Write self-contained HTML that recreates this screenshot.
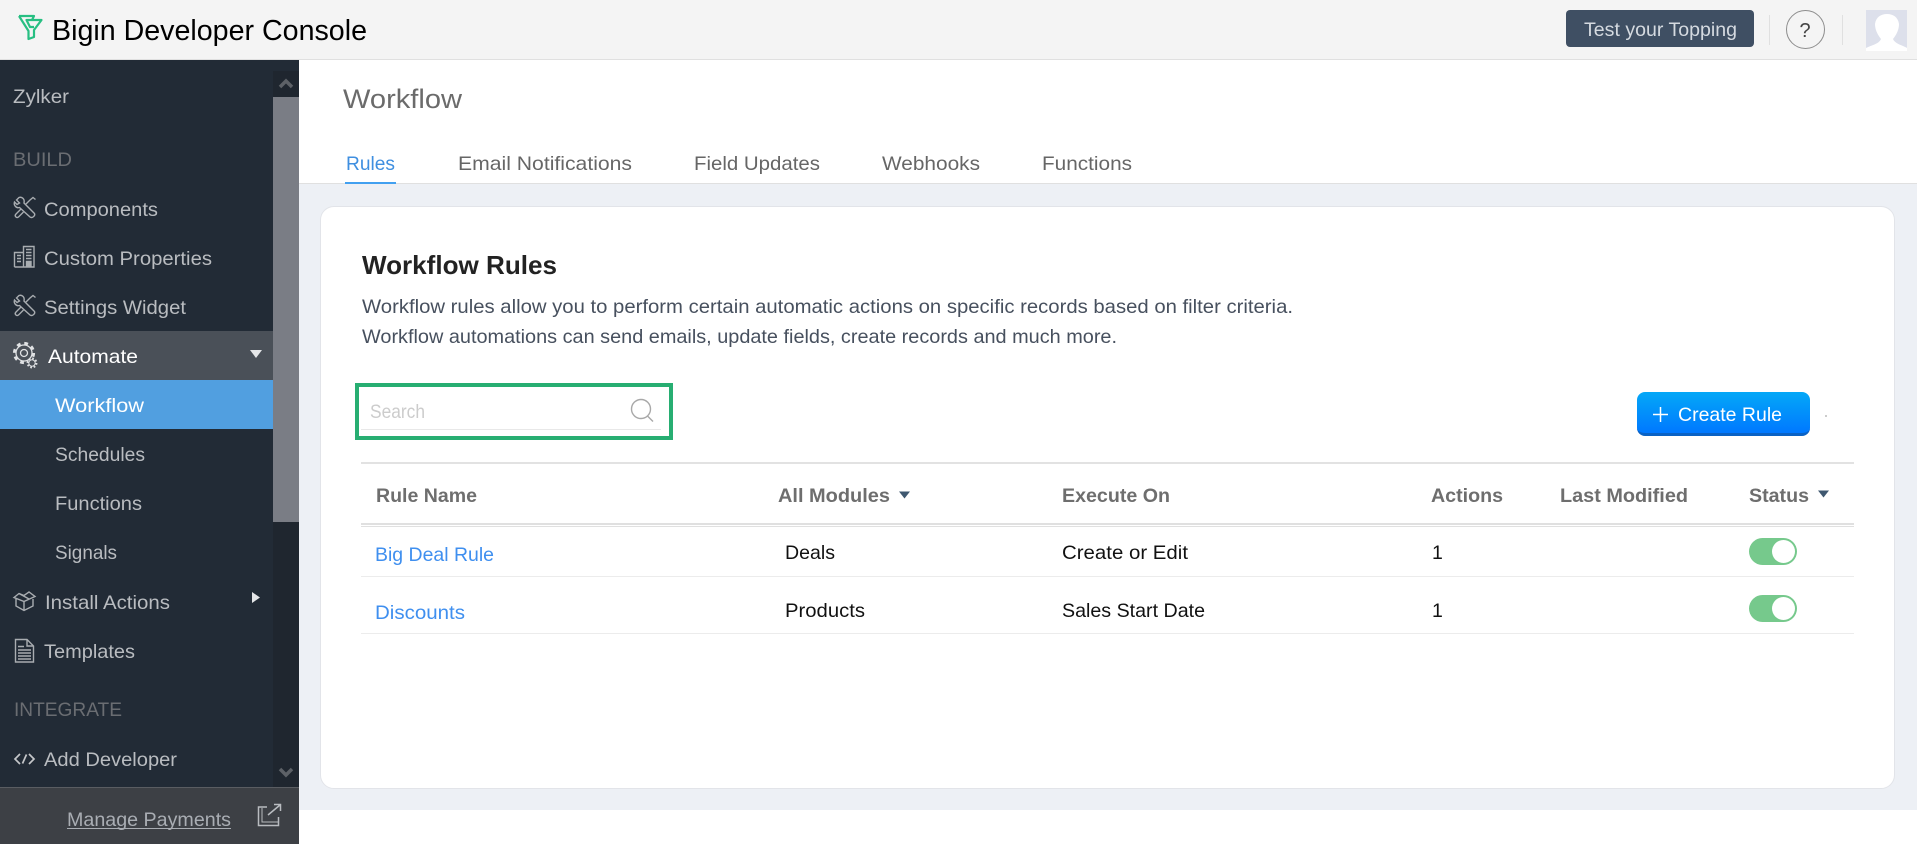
<!DOCTYPE html>
<html><head><meta charset="utf-8"><title>Bigin Developer Console - Workflow</title>
<style>
html,body{margin:0;padding:0;width:1917px;height:844px;overflow:hidden;background:#fff}
div{position:absolute;box-sizing:border-box}
svg{position:absolute;left:0;top:0}
text{font-family:"Liberation Sans",sans-serif;font-size:19.5px}
.n{fill:#b9bcc0}.h{fill:#6a6d72;font-size:19.5px}.t{fill:#666}.b{font-weight:700;fill:#6e6e6e}.c{fill:#111}.l{fill:#3f8fef}
.i{fill:none;stroke:#a9adb1;stroke-width:1.4}
</style></head><body>
<div style="left:0;top:0;width:1917px;height:60px;background:#f4f4f4;border-bottom:1px solid #e0e0e0"></div>
<div style="left:0;top:60px;width:299px;height:727px;background:#222b36"></div>
<div style="left:273px;top:71px;width:26px;height:716px;background:#1f262f"></div>
<div style="left:273px;top:97px;width:26px;height:425px;background:#7a7d85"></div>
<div style="left:0;top:331px;width:273px;height:49px;background:#4a5058"></div>
<div style="left:0;top:380px;width:273px;height:49px;background:#519fe0"></div>
<div style="left:0;top:787px;width:299px;height:57px;background:#3d4045;border-top:1px solid #5a5d62"></div>
<div style="left:299px;top:183px;width:1618px;height:627px;background:#edf0f5;border-top:1px solid #e0e0e0"></div>
<div style="left:345px;top:182px;width:51px;height:2px;background:#42a0f0"></div>
<div style="left:320px;top:206px;width:1575px;height:583px;background:#fff;border:1px solid #e2e4e9;border-radius:14px"></div>
<div style="left:355px;top:383px;width:318px;height:57px;border:4px solid #27ae72"></div>
<div style="left:361px;top:429px;width:300px;height:1px;background:#e8e8e8"></div>
<div style="left:361px;top:462px;width:1493px;height:2px;background:#e2e2e2"></div>
<div style="left:361px;top:523px;width:1493px;height:4px;border-top:2px solid #e0e0e0;border-bottom:1px solid #e0e0e0"></div>
<div style="left:361px;top:576px;width:1493px;height:1px;background:#ececec"></div>
<div style="left:361px;top:633px;width:1493px;height:1px;background:#ececec"></div>
<div style="left:1566px;top:10px;width:188px;height:37px;background:#3f4f63;border-radius:4px"></div>
<div style="left:1769px;top:15px;width:1px;height:30px;background:#e0e0e0"></div>
<div style="left:1842px;top:15px;width:1px;height:30px;background:#e0e0e0"></div>
<div style="left:1786px;top:10px;width:39px;height:39px;border:1px solid #8d8d8d;border-radius:50%"></div>
<div style="left:1866px;top:10px;width:41px;height:41px;background:#dde0eb"></div>
<div style="left:1637px;top:392px;width:173px;height:44px;border-radius:8px;background:linear-gradient(#04a8f7,#0078ff);border-bottom:3px solid #0a62c4"></div>
<div style="left:1825px;top:415px;width:2px;height:2px;background:#ccc"></div>
<div style="left:1749px;top:538px;width:48px;height:27px;border-radius:14px;background:#76c98c"></div>
<div style="left:1749px;top:595px;width:48px;height:27px;border-radius:14px;background:#76c98c"></div>
<div style="left:1772px;top:540px;width:23px;height:23px;border-radius:50%;background:#fff"></div>
<div style="left:1772px;top:597px;width:23px;height:23px;border-radius:50%;background:#fff"></div>

<svg width="1917" height="844" viewBox="0 0 1917 844" xmlns="http://www.w3.org/2000/svg">
<!-- logo -->
<path d="M19 16H34L32 20M19 16L28.500 31V39L34 37V30L41.500 20H26.500L30 27H34" fill="none" stroke="#27bf82" stroke-width="2.200" stroke-linejoin="round"/>
<text x="52" y="40" textLength="315" lengthAdjust="spacingAndGlyphs" style="font-size:28.5px" fill="#000">Bigin Developer Console</text>
<text x="1584" y="36" textLength="153" lengthAdjust="spacingAndGlyphs" style="font-size:19.5px" fill="#d5dae0">Test your Topping</text>
<text x="1805" y="37" text-anchor="middle" style="font-size:20px" fill="#444">?</text>
<path d="M1866 51V48C1872 45 1879 44 1881 39C1877 34 1875 29 1875 24C1876 17 1881 14 1887 14C1893 14 1898 17 1899 24C1899 29 1897 34 1893 39C1895 44 1902 45 1907 48V51Z" fill="#fff"/>
<!-- sidebar -->
<text x="13" y="103" textLength="56" lengthAdjust="spacingAndGlyphs" class="n">Zylker</text>
<text x="13" y="166" textLength="59" lengthAdjust="spacingAndGlyphs" class="h">BUILD</text>
<text x="44" y="216" textLength="114" lengthAdjust="spacingAndGlyphs" class="n">Components</text>
<text x="44" y="265" textLength="168" lengthAdjust="spacingAndGlyphs" class="n">Custom Properties</text>
<text x="44" y="314" textLength="142" lengthAdjust="spacingAndGlyphs" class="n">Settings Widget</text>
<text x="48" y="363" textLength="90" lengthAdjust="spacingAndGlyphs" fill="#fff">Automate</text>
<text x="55" y="412" textLength="89" lengthAdjust="spacingAndGlyphs" fill="#fff">Workflow</text>
<text x="55" y="461" textLength="90" lengthAdjust="spacingAndGlyphs" class="n">Schedules</text>
<text x="55" y="510" textLength="87" lengthAdjust="spacingAndGlyphs" class="n">Functions</text>
<text x="55" y="559" textLength="62" lengthAdjust="spacingAndGlyphs" class="n">Signals</text>
<text x="45" y="609" textLength="125" lengthAdjust="spacingAndGlyphs" class="n">Install Actions</text>
<text x="44" y="658" textLength="91" lengthAdjust="spacingAndGlyphs" class="n">Templates</text>
<text x="14" y="716" textLength="108" lengthAdjust="spacingAndGlyphs" class="h">INTEGRATE</text>
<text x="44" y="766" textLength="133" lengthAdjust="spacingAndGlyphs" class="n">Add Developer</text>
<text x="67" y="826" textLength="164" lengthAdjust="spacingAndGlyphs" fill="#a9adb3">Manage Payments</text>
<path d="M67 828.500H231" stroke="#a9adb3" stroke-width="1"/>
<!-- scroll arrows -->
<path d="M280 87L286 81L292 87" fill="none" stroke="#5d6167" stroke-width="3.500"/>
<path d="M280 769L286 775L292 769" fill="none" stroke="#5d6167" stroke-width="3.500"/>
<!-- nav icons -->
<g id="tools" class="i">
<path d="M19 197.500L16.500 200L19.500 203L17 204.500L14.500 202C13.500 205 16 208.500 19.500 207.500L30 217C32 218.500 35.500 216 34.500 213.500L24 203C25 199 22 196.500 19 197.500Z"/>
<path d="M35.500 199.500L33 197.500L30 200L26 204M21 209L16 214C14 216 16.500 218.500 18.500 217L23.500 212"/>
</g>
<use href="#tools" y="98"/>
<g class="i">
<path d="M14.500 267V252.500H23.500M23.500 267V246.500H34V267H14.500"/>
<path d="M17 255.500H21M17 258.500H21M17 261.500H21M26 249.500H31.500M26 252.500H31.500M26 255.500H31.500M26 258.500H31.500" stroke-width="1.600"/>
<path d="M26.500 267V261.500H31V267" fill="#a9adb1"/>
</g>
<g fill="none" stroke="#e0e2e4">
<circle cx="24" cy="353" r="9.500" stroke-width="3.200" stroke-dasharray="3.700 3.760"/>
<circle cx="24" cy="353" r="8" fill="#4a5058" stroke-width="1.300"/>
<circle cx="24" cy="353" r="3.500" stroke-width="1.300"/>
<circle cx="32" cy="363" r="4.200" fill="#4a5058" stroke-width="2.500" stroke-dasharray="1.600 1.700"/>
<circle cx="32" cy="363" r="3.200" stroke-width="1"/>
</g>
<g class="i">
<path d="M14 597.500L19 593.500L24 595.500L29 592L35 596.500L24 601.500ZM16 599V606L24 610.500L33 606V599M24 601.500V610.500"/>
<path d="M19 593.500L29 599"/>
</g>
<g class="i">
<path d="M15.500 639.500H27L33.500 646V662H15.500ZM27 639.500V646H33.500"/>
<path d="M18 646.500H24M18 650H31M18 653H31M18 656H31M18 659H31" stroke-width="1.500"/>
</g>
<g fill="none" stroke="#c5c7ca" stroke-width="1.700"><path d="M20 754L15 759L20 764M29 754L34 759L29 764"/><path d="M26.500 754.500L22.500 763.500"/></g>
<path d="M250 350H262L256 358Z" fill="#e4e6e8"/>
<path d="M252 592V603L260 597.500Z" fill="#e4e6e8"/>
<g fill="none" stroke="#b9bcc0" stroke-width="1.500"><path d="M267 807H258.500V825.500H278.500V817M268 815L280 805M274 804.500H280.500V811"/><path d="M262 808V822H278" stroke-width="1"/></g>
<!-- main -->
<text x="343" y="108" textLength="119" lengthAdjust="spacingAndGlyphs" style="font-size:26.500px" fill="#6b6b6b">Workflow</text>
<text x="346" y="170" textLength="49" lengthAdjust="spacingAndGlyphs" fill="#3f8fe0">Rules</text>
<text x="458" y="170" textLength="174" lengthAdjust="spacingAndGlyphs" class="t">Email Notifications</text>
<text x="694" y="170" textLength="126" lengthAdjust="spacingAndGlyphs" class="t">Field Updates</text>
<text x="882" y="170" textLength="98" lengthAdjust="spacingAndGlyphs" class="t">Webhooks</text>
<text x="1042" y="170" textLength="90" lengthAdjust="spacingAndGlyphs" class="t">Functions</text>
<text x="362" y="274" textLength="195" lengthAdjust="spacingAndGlyphs" style="font-size:26px;font-weight:700" fill="#222">Workflow Rules</text>
<text x="362" y="313" textLength="931" lengthAdjust="spacingAndGlyphs" fill="#47505e">Workflow rules allow you to perform certain automatic actions on specific records based on filter criteria.</text>
<text x="362" y="343" textLength="755" lengthAdjust="spacingAndGlyphs" fill="#47505e">Workflow automations can send emails, update fields, create records and much more.</text>
<text x="370" y="418" textLength="55" lengthAdjust="spacingAndGlyphs" fill="#cccccc">Search</text>
<circle cx="641" cy="409" r="9.500" fill="none" stroke="#a8a8a8" stroke-width="1.400"/>
<path d="M647.500 416L653 421.500" stroke="#a8a8a8" stroke-width="1.400"/>
<path d="M1653 414.500H1668M1660.500 407V422" stroke="#fff" stroke-width="1.500"/>
<text x="1678" y="421" textLength="104" lengthAdjust="spacingAndGlyphs" fill="#fff">Create Rule</text>
<text x="376" y="502" textLength="101" lengthAdjust="spacingAndGlyphs" class="b">Rule Name</text>
<text x="778" y="502" textLength="112" lengthAdjust="spacingAndGlyphs" class="b">All Modules</text>
<path d="M899 491.500H910L904.500 498.500Z" fill="#3f5870"/>
<text x="1062" y="502" textLength="108" lengthAdjust="spacingAndGlyphs" class="b">Execute On</text>
<text x="1431" y="502" textLength="72" lengthAdjust="spacingAndGlyphs" class="b">Actions</text>
<text x="1560" y="502" textLength="128" lengthAdjust="spacingAndGlyphs" class="b">Last Modified</text>
<text x="1749" y="502" textLength="60" lengthAdjust="spacingAndGlyphs" class="b">Status</text>
<path d="M1818 490.500H1829L1823.500 497.500Z" fill="#3f5870"/>
<text x="375" y="561" textLength="119" lengthAdjust="spacingAndGlyphs" class="l">Big Deal Rule</text>
<text x="375" y="619" textLength="90" lengthAdjust="spacingAndGlyphs" class="l">Discounts</text>
<text x="785" y="559" textLength="50" lengthAdjust="spacingAndGlyphs" class="c">Deals</text>
<text x="785" y="617" textLength="80" lengthAdjust="spacingAndGlyphs" class="c">Products</text>
<text x="1062" y="559" textLength="126" lengthAdjust="spacingAndGlyphs" class="c">Create or Edit</text>
<text x="1062" y="617" textLength="143" lengthAdjust="spacingAndGlyphs" class="c">Sales Start Date</text>
<text x="1432" y="559" class="c">1</text>
<text x="1432" y="617" class="c">1</text>
</svg>
</body></html>
